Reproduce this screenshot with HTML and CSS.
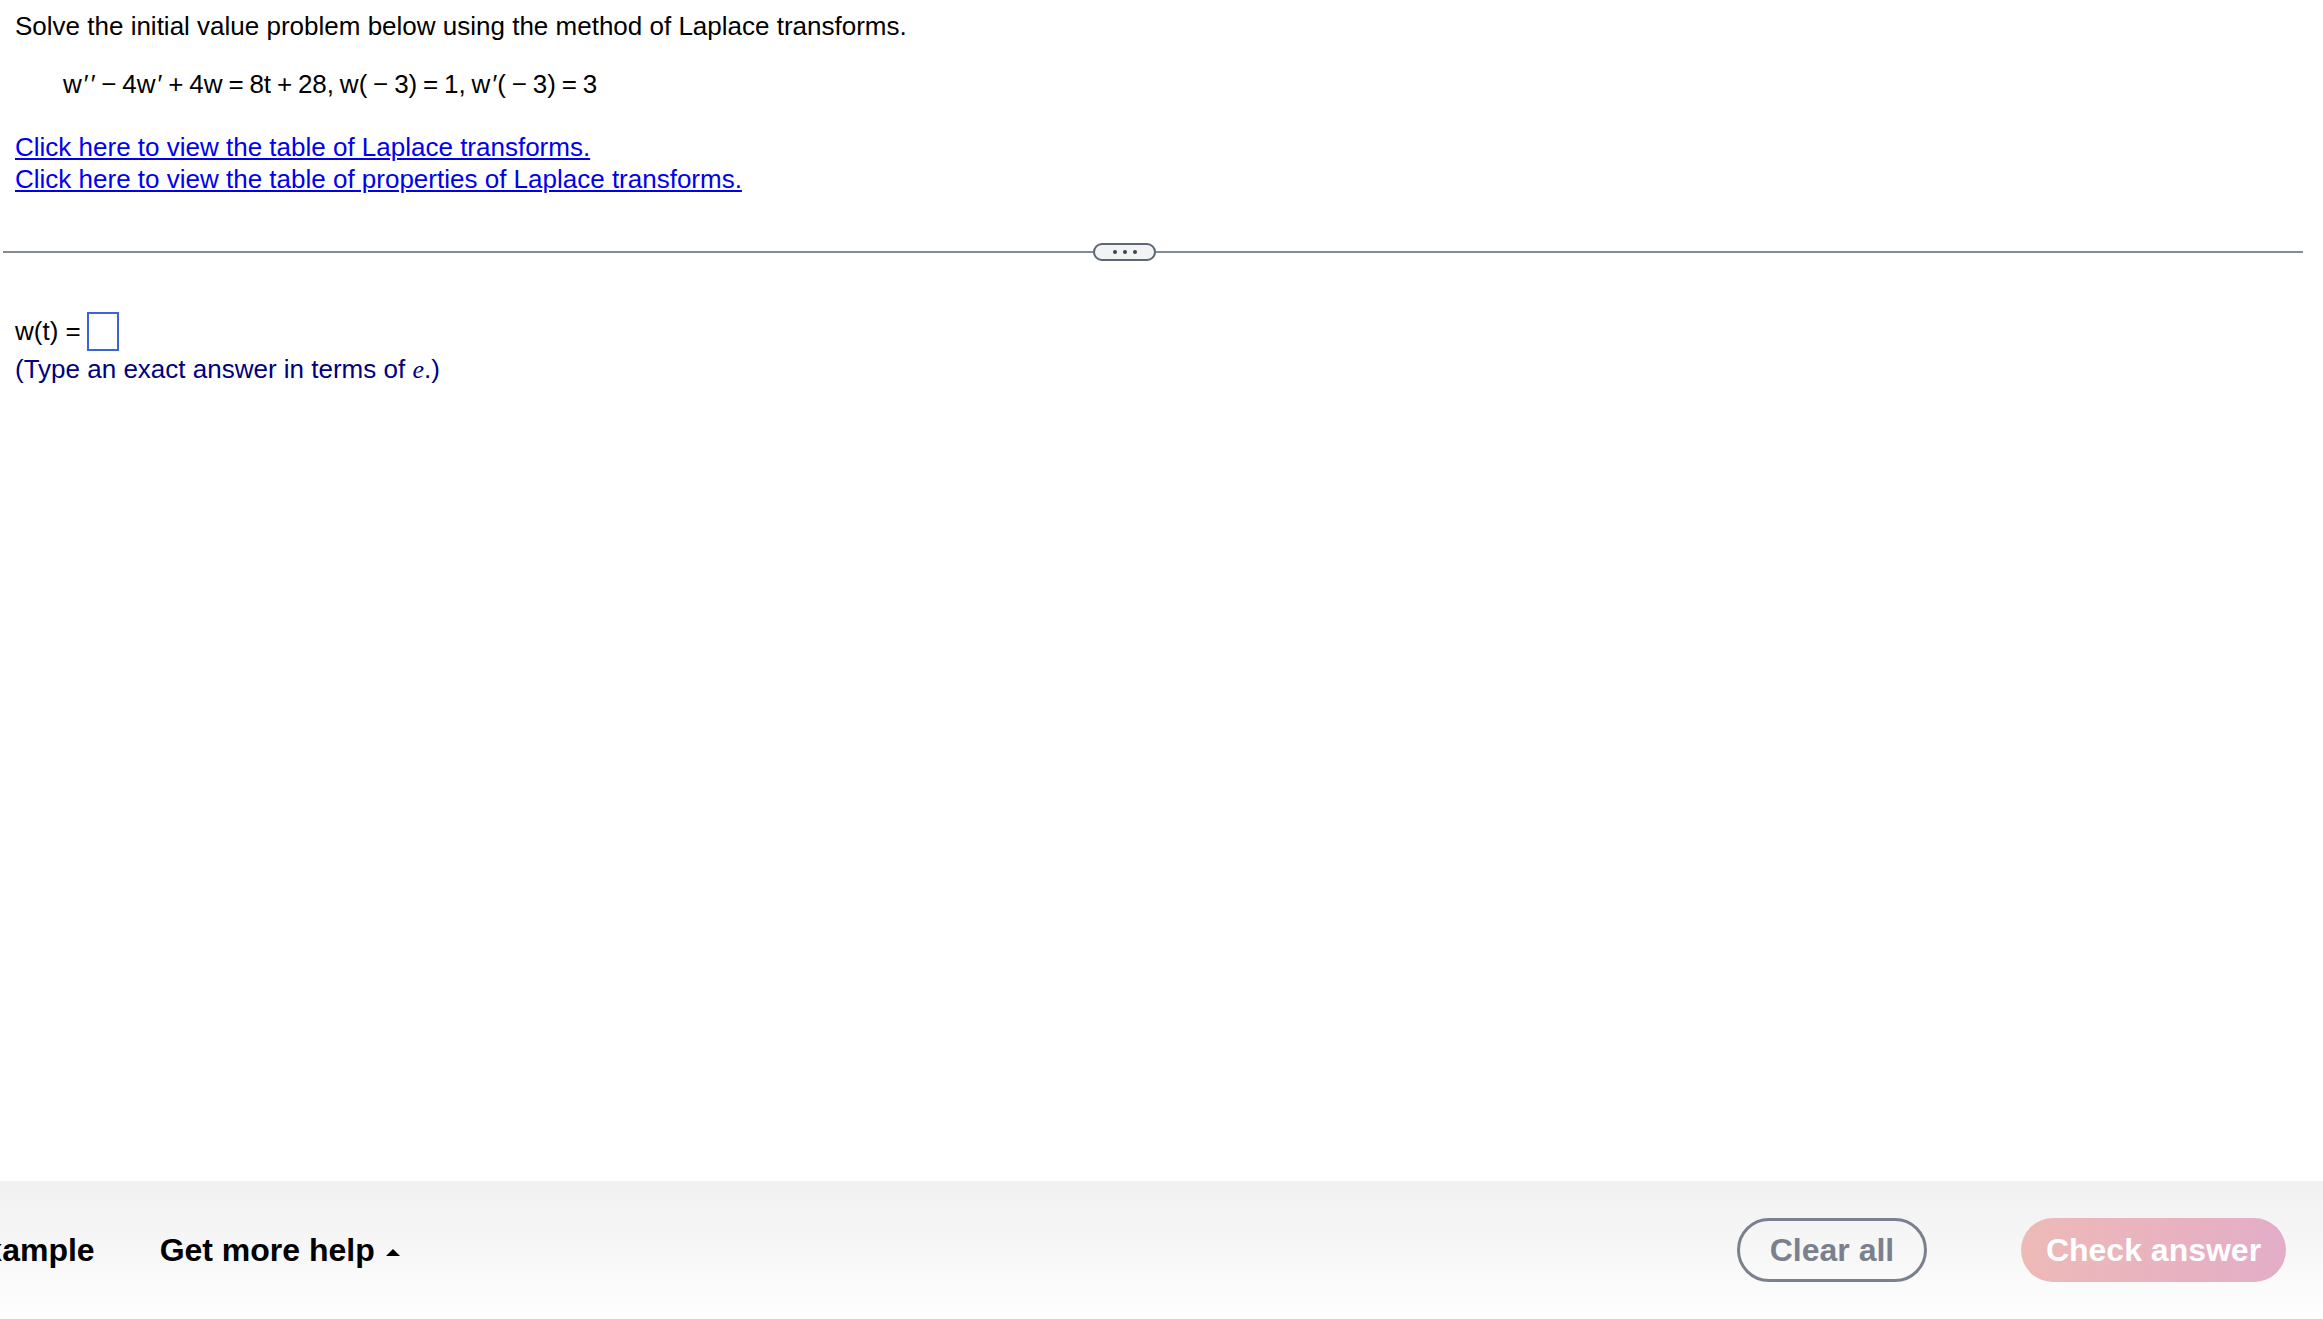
FILE: index.html
```html
<!DOCTYPE html>
<html lang="en">
<head>
<meta charset="utf-8">
<title>Laplace transforms</title>
<link rel="stylesheet" href="styles.css">
</head>
<body>
<div class="page">
  <main class="main">
    <section class="prompt">
      <p class="title">Solve the initial value problem below using the method of Laplace transforms.</p>
      <p class="equation">w<span class="prime">′</span><span class="prime">′</span> − 4w<span class="prime">′</span> + 4w = 8t + 28, w( − 3) = 1, w<span class="prime">′</span>( − 3) = 3</p>
      <div class="links">
        <a href="#" class="link">Click here to view the table of Laplace transforms.</a>
        <a href="#" class="link">Click here to view the table of properties of Laplace transforms.</a>
      </div>
    </section>
    <div class="divider">
      <div class="rule rule-left"></div>
      <div class="pill"><span class="dot"></span><span class="dot"></span><span class="dot"></span></div>
      <div class="rule rule-right"></div>
    </div>
    <section class="answer">
      <div class="answer-row">
        <span class="answer-label">w(t) =</span>
        <span class="answer-box"></span>
      </div>
      <p class="hint">(Type an exact answer in terms of <span class="math-e">e</span>.)</p>
    </section>
  </main>
  <footer class="footer">
    <span class="foot-link example">Example</span>
    <span class="foot-link help">Get more help<span class="caret"></span></span>
    <div class="buttons">
      <button class="btn btn-clear">Clear all</button>
      <button class="btn btn-check">Check answer</button>
    </div>
  </footer>
</div>
</body>
</html>
```

FILE: styles.css
```css
html, body {
  margin: 0;
  padding: 0;
  background: #ffffff;
}

body {
  font-family: "Liberation Sans", Arial, Helvetica, sans-serif;
  color: #000000;
}

.page {
  display: flex;
  flex-direction: column;
  height: 100vh;
  overflow: hidden;
}

.main {
  flex: 1;
  padding-top: 11px;
}

.prompt {
  padding-left: 15px;
}

.title {
  margin: 0;
  font-size: 26px;
  line-height: 30px;
}

.equation {
  margin: 28px 0 0 48px;
  font-size: 26px;
  line-height: 30px;
  white-space: nowrap;
  word-spacing: -1.4px;
}

.prime {
  margin-left: 2px;
}

.links {
  margin-top: 32px;
  display: flex;
  flex-direction: column;
  align-items: flex-start;
}

.link {
  font-size: 26px;
  line-height: 32px;
  color: #0000ee;
  text-decoration: underline;
  text-underline-offset: 2px;
}

.divider {
  margin: 48px 20px 0 3px;
  height: 18px;
  display: flex;
  align-items: center;
}

.rule {
  height: 2px;
  background: #858b99;
}

.rule-left {
  flex: 0 0 1090px;
}

.rule-right {
  flex: 1;
}

.pill {
  box-sizing: border-box;
  width: 63px;
  height: 18px;
  border: 2px solid #5c6675;
  border-radius: 9px;
  background: #f2f3f5;
  display: flex;
  align-items: center;
  justify-content: center;
  gap: 6px;
}

.dot {
  width: 4px;
  height: 4px;
  border-radius: 50%;
  background: #3c4450;
}

.answer {
  margin-top: 51px;
  padding-left: 15px;
}

.answer-row {
  display: flex;
  align-items: center;
  height: 39px;
}

.answer-label {
  font-size: 26px;
  line-height: 30px;
  margin-top: -2px;
}

.answer-box {
  box-sizing: border-box;
  width: 32px;
  height: 39px;
  margin-left: 6px;
  border: 2px solid #3c64d2;
  background: #ffffff;
}

.hint {
  margin: 3px 0 0 0;
  font-size: 26px;
  line-height: 30px;
  color: #000080;
}

.math-e {
  font-family: "Liberation Serif", "Times New Roman", serif;
  font-style: italic;
}

.footer {
  flex: 0 0 138px;
  display: flex;
  align-items: center;
  background: linear-gradient(to bottom, #f0f0f0 0%, #f7f7f7 50%, #fefefe 100%);
  overflow: hidden;
}

.foot-link {
  font-size: 32px;
  font-weight: bold;
  color: #000000;
  white-space: nowrap;
}

.example {
  margin-left: -37px;
}

.help {
  margin-left: 65px;
  display: inline-flex;
  align-items: center;
}

.caret {
  width: 0;
  height: 0;
  margin-left: 11px;
  margin-top: 4px;
  border-left: 7px solid transparent;
  border-right: 7px solid transparent;
  border-bottom: 7px solid #000000;
}

.buttons {
  margin-left: auto;
  margin-right: 37px;
  display: flex;
  gap: 94px;
}

.btn {
  box-sizing: border-box;
  height: 64px;
  border-radius: 32px;
  font-family: "Liberation Sans", Arial, Helvetica, sans-serif;
  font-size: 32px;
  font-weight: bold;
  cursor: pointer;
}

.btn-clear {
  width: 190px;
  background: transparent;
  border: 3px solid #7b808e;
  color: #7b808e;
}

.btn-check {
  width: 265px;
  border: none;
  color: #ffffff;
  background: linear-gradient(to right, #edbab7 0%, #e9b3bf 50%, #e3adc8 100%);
}
```
